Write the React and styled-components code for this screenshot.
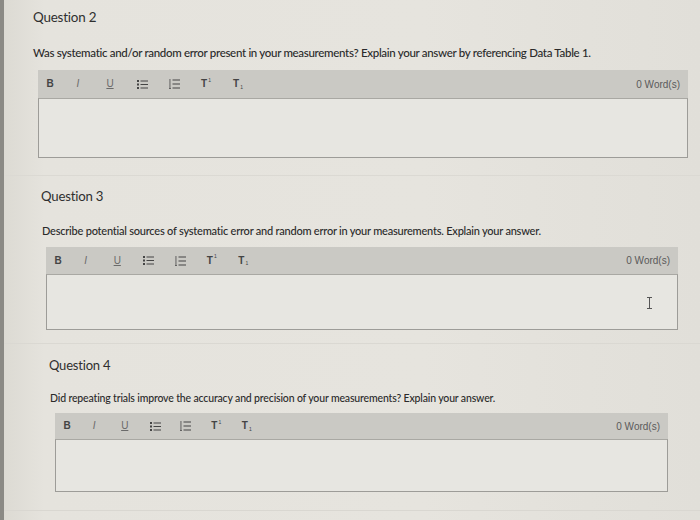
import React from "react";
import styled, { createGlobalStyle } from "styled-components";

const Global = createGlobalStyle`
  html, body { margin: 0; padding: 0; }
  body {
    background: #e4e2dc;
    font-family: Lato, "Open Sans", Arial, sans-serif;
    color: #2e2e2e;
  }
`;

const Page = styled.div`
  width: 700px;
  height: 520px;
  box-sizing: border-box;
  border-left: 4px solid #8b8a85;
  background: linear-gradient(90deg, #dcdad3 0px, #e5e3dd 40px, #e6e4de 60%, #e1dfd9 100%);
  overflow: hidden;
  display: flex;
  flex-direction: column;
`;

const Section = styled.section`
  padding: ${(p) => `${p.$pt}px ${p.$right}px ${p.$pb}px ${p.$left}px`};
  border-bottom: 1px solid ${(p) => p.$line};
  display: flex;
  flex-direction: column;
`;

const Title = styled.h2`
  margin: 0;
  font-size: ${(p) => p.$size}px;
  line-height: 18px;
  font-weight: 400;
  letter-spacing: -0.2px;
  color: #2f2f2f;
`;

const Prompt = styled.p`
  margin: ${(p) => p.$mt}px 0 0 ${(p) => p.$shift}px;
  font-size: ${(p) => p.$size}px;
  letter-spacing: ${(p) => p.$ls}px;
  line-height: 16px;
  font-weight: 500;
  color: #2a2a2a;
  white-space: nowrap;
`;

const Editor = styled.div`
  margin: ${(p) => p.$mt}px 0 0 ${(p) => p.$inset}px;
  display: flex;
  flex-direction: column;
`;

const Toolbar = styled.div`
  height: ${(p) => p.$h}px;
  background: #cac9c4;
  display: flex;
  align-items: center;
  padding-right: 8px;
  color: #454545;
`;

const Tool = styled.span`
  width: ${(p) => (p.$first ? 24 : p.$step)}px;
  flex: none;
  display: flex;
  align-items: center;
  justify-content: center;
  font-family: "Liberation Sans", Arial, sans-serif;
  font-size: 10px;
  line-height: 1;
  font-weight: ${(p) => (p.$bold ? 700 : 400)};
  font-style: ${(p) => (p.$italic ? "italic" : "normal")};
  text-decoration: ${(p) => (p.$under ? "underline" : "none")};
  color: ${(p) => (p.$light ? "#6a6a6a" : "#444")};
`;

const Script = styled.span`
  font-size: 5px;
  line-height: 1;
  font-weight: 400;
  margin-left: 1px;
  position: relative;
  top: ${(p) => (p.$up ? -4 : 3)}px;
`;

const Count = styled.span`
  margin-left: auto;
  font-family: "Liberation Sans", Arial, sans-serif;
  font-size: 10px;
  color: #5a5a5a;
`;

const Body = styled.div`
  position: relative;
  height: ${(p) => p.$h}px;
  box-sizing: border-box;
  border: 1px solid #9d9c98;
  border-top-color: #a9a8a3;
  background: #e7e6e1;
`;

const Cursor = styled.svg`
  position: absolute;
  right: ${(p) => p.$right}px;
  top: ${(p) => p.$top}px;
`;

const BulletIcon = () => (
  <svg width="11" height="9" viewBox="0 0 11 9">
    {[1, 4.5, 8].map((y) => (
      <g key={y}>
        <rect x="0" y={y - 1} width="2" height="2" fill="#444" />
        <rect x="3.5" y={y - 0.5} width="7.5" height="1" fill="#444" />
      </g>
    ))}
  </svg>
);

const NumberIcon = () => (
  <svg width="11" height="10" viewBox="0 0 11 10">
    <rect x="0.5" y="0" width="0.9" height="10" fill="#555" />
    <rect x="0" y="9.2" width="2" height="0.8" fill="#555" />
    {[1, 5, 9].map((y) => (
      <rect key={y} x="3.5" y={y - 0.5} width="7.5" height="1" fill="#444" />
    ))}
  </svg>
);

const questions = [
  {
    n: 2,
    text: "Was systematic and/or random error present in your measurements? Explain your answer by referencing Data Table 1.",
    left: 29, right: 12, pt: 8, pb: 17, titleSize: 13.4, promptSize: 11.5, ls: -0.31, promptMt: 19, shift: 0,
    inset: 5, edMt: 9, tb: 28, body: 60, step: 32, line: "#dbd9d3",
  },
  {
    n: 3,
    text: "Describe potential sources of systematic error and random error in your measurements. Explain your answer.",
    left: 37, right: 22, pt: 11, pb: 13, titleSize: 13.2, promptSize: 11, ls: -0.22, promptMt: 18, shift: 1,
    inset: 5, edMt: 8, tb: 27, body: 56, step: 31.5, line: "#dad8d2", cursor: true,
  },
  {
    n: 4,
    text: "Did repeating trials improve the accuracy and precision of your measurements? Explain your answer.",
    left: 45, right: 32, pt: 12, pb: 18, titleSize: 13, promptSize: 10.5, ls: -0.15, promptMt: 16, shift: 1,
    inset: 6, edMt: 7, tb: 26, body: 53, step: 30.5, line: "#d9d7d1",
  },
];

export default function App() {
  return (
    <>
      <Global />
      <Page>
        {questions.map((q) => (
          <Section key={q.n} $pt={q.pt} $pb={q.pb} $left={q.left} $right={q.right} $line={q.line}>
            <Title $size={q.titleSize}>Question {q.n}</Title>
            <Prompt $size={q.promptSize} $ls={q.ls} $mt={q.promptMt} $shift={q.shift}>{q.text}</Prompt>
            <Editor $mt={q.edMt} $inset={q.inset}>
              <Toolbar $h={q.tb}>
                <Tool $first $bold>B</Tool>
                <Tool $step={q.step} $italic $light>I</Tool>
                <Tool $step={q.step} $under $light>U</Tool>
                <Tool $step={q.step}><BulletIcon /></Tool>
                <Tool $step={q.step}><NumberIcon /></Tool>
                <Tool $step={q.step} $bold>T<Script $up>1</Script></Tool>
                <Tool $step={q.step} $bold>T<Script>1</Script></Tool>
                <Count>0 Word(s)</Count>
              </Toolbar>
              <Body $h={q.body}>
                {q.cursor && (
                  <Cursor $right={24} $top={22} width="7" height="12" viewBox="0 0 7 12">
                    <path d="M1 0.5h5M1 11.5h5M3.5 0.5v11" stroke="#555" strokeWidth="1" fill="none" />
                  </Cursor>
                )}
              </Body>
            </Editor>
          </Section>
        ))}
      </Page>
    </>
  );
}
